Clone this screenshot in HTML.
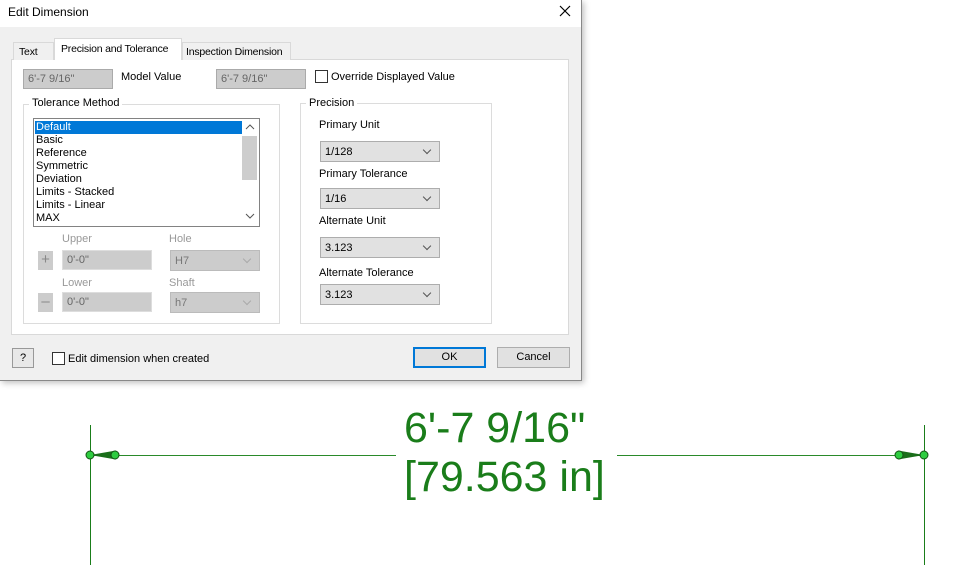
<!DOCTYPE html>
<html><head><style>
*{box-sizing:border-box;margin:0;padding:0}
body{width:961px;height:565px;background:#fff;position:relative;overflow:hidden;font-family:"Liberation Sans",sans-serif;font-size:11px;color:#000}
.a{position:absolute;white-space:nowrap}
.dlg{left:0;top:0;width:582px;height:381px;background:#f0f0f0;border-right:1px solid #888;border-bottom:1px solid #888;box-shadow:2px 2px 6px rgba(0,0,0,.25)}
.tb{left:0;top:0;width:581px;height:27px;background:#fff}
.inp{background:#ccc;border:1px solid #aaa;color:#666;padding:3px 4px;height:19px}
.combo{background:#e1e1e1;border:1px solid #adadad;height:21px;padding:4px 4px;width:120px}
.combo:after{content:"";position:absolute;right:9px;top:5px;width:5px;height:5px;border-right:1px solid #555;border-bottom:1px solid #555;transform:rotate(45deg)}
.dis{background:#ccc;border:1px solid #bbb;color:#777}
.dis:after{border-color:#aaa}
.grp{border:1px solid #dcdcdc}
.lg{background:#fff;padding:0 3px}
.cb{width:13px;height:13px;border:1px solid #333;background:#fff}
.btn{background:#e1e1e1;border:1px solid #adadad;height:21px;text-align:center;line-height:19px}
.g{color:#1a7d1a}
.tab{font-size:10.5px;letter-spacing:-0.2px}
</style></head><body>
<div class="a dlg"></div>
<div class="a tb"></div>
<div class="a" style="left:8px;top:5px;font-size:12px">Edit Dimension</div>
<svg class="a" style="left:559px;top:5px" width="12" height="12"><path d="M1 1L11 11M11 1L1 11" stroke="#000" stroke-width="1.2"/></svg>
<!-- panel -->
<div class="a" style="left:11px;top:59px;width:558px;height:276px;background:#fff;border:1px solid #d9d9d9"></div>
<div class="a tab" style="left:13px;top:42px;width:41px;height:18px;border:1px solid #d9d9d9;border-bottom:none;background:#f0f0f0;padding:3px 5px">Text</div>
<div class="a tab" style="left:54px;top:38px;width:128px;height:22px;border:1px solid #d9d9d9;border-bottom:none;background:#fff;padding:4px 6px">Precision and Tolerance</div>
<div class="a tab" style="left:182px;top:42px;width:109px;height:18px;border:1px solid #d9d9d9;border-bottom:none;background:#f0f0f0;padding:3px 3px">Inspection Dimension</div>
<div class="a inp" style="left:23px;top:69px;width:90px;height:20px">6'-7 9/16"</div>
<div class="a" style="left:121px;top:71px">Model Value</div>
<div class="a inp" style="left:216px;top:69px;width:90px;height:20px">6'-7 9/16"</div>
<div class="a cb" style="left:315px;top:70px"></div>
<div class="a" style="left:331px;top:71px">Override Displayed Value</div>
<!-- tolerance group -->
<div class="a grp" style="left:23px;top:104px;width:257px;height:220px"></div>
<div class="a lg" style="left:29px;top:97px">Tolerance Method</div>
<div class="a" style="left:33px;top:118px;width:227px;height:109px;border:1px solid #828282;background:#fff;line-height:13px;padding-left:1px">
<div style="background:#0078d7;color:#fff;width:207px;margin-top:2px;padding-left:1px">Default</div>
<div style="padding-left:1px">Basic</div><div style="padding-left:1px">Reference</div><div style="padding-left:1px">Symmetric</div><div style="padding-left:1px">Deviation</div><div style="padding-left:1px">Limits - Stacked</div><div style="padding-left:1px">Limits - Linear</div><div style="padding-left:1px">MAX</div>
</div>
<div class="a" style="left:242px;top:136px;width:15px;height:44px;background:#cdcdcd"></div>
<svg class="a" style="left:245px;top:124px" width="10" height="6"><path d="M1 5L5 1L9 5" stroke="#555" fill="none"/></svg>
<svg class="a" style="left:245px;top:213px" width="10" height="6"><path d="M1 1L5 5L9 1" stroke="#555" fill="none"/></svg>
<div class="a" style="left:62px;top:233px;color:#999">Upper</div>
<div class="a" style="left:169px;top:233px;color:#999">Hole</div>
<div class="a" style="left:38px;top:251px;width:15px;height:19px;background:#ccc;color:#888;text-align:center;font-size:15px;line-height:18px">+</div>
<div class="a inp" style="left:62px;top:250px;width:90px;height:20px;border-color:#ddd">0'-0"</div>
<div class="a combo dis" style="left:170px;top:250px;width:90px">H7</div>
<div class="a" style="left:62px;top:277px;color:#999">Lower</div>
<div class="a" style="left:169px;top:277px;color:#999">Shaft</div>
<div class="a" style="left:38px;top:293px;width:15px;height:19px;background:#ccc;color:#888;text-align:center;font-size:15px;line-height:18px">–</div>
<div class="a inp" style="left:62px;top:292px;width:90px;height:20px;border-color:#ddd">0'-0"</div>
<div class="a combo dis" style="left:170px;top:292px;width:90px">h7</div>
<!-- precision -->
<div class="a grp" style="left:300px;top:103px;width:192px;height:221px"></div>
<div class="a lg" style="left:306px;top:97px">Precision</div>
<div class="a" style="left:319px;top:119px">Primary Unit</div>
<div class="a combo" style="left:320px;top:141px">1/128</div>
<div class="a" style="left:319px;top:168px">Primary Tolerance</div>
<div class="a combo" style="left:320px;top:188px">1/16</div>
<div class="a" style="left:319px;top:215px">Alternate Unit</div>
<div class="a combo" style="left:320px;top:237px">3.123</div>
<div class="a" style="left:319px;top:267px">Alternate Tolerance</div>
<div class="a combo" style="left:320px;top:284px">3.123</div>
<!-- bottom -->
<div class="a" style="left:12px;top:348px;width:22px;height:20px;border:1px solid #999;background:#e8e8e8;text-align:center;line-height:18px;font-size:11px">?</div>
<div class="a cb" style="left:52px;top:352px"></div>
<div class="a" style="left:68px;top:353px">Edit dimension when created</div>
<div class="a btn" style="left:413px;top:347px;width:73px;border:2px solid #0078d7;line-height:17px">OK</div>
<div class="a btn" style="left:497px;top:347px;width:73px">Cancel</div>
<!-- drawing -->
<div class="a" style="left:90px;top:425px;width:1px;height:140px;background:#1a7d1a"></div>
<div class="a" style="left:924px;top:425px;width:1px;height:140px;background:#1a7d1a"></div>
<div class="a" style="left:90px;top:455px;width:306px;height:1px;background:#2a8a2a"></div>
<div class="a" style="left:617px;top:455px;width:308px;height:1px;background:#2a8a2a"></div>
<svg class="a" style="left:80px;top:445px" width="50" height="20"><polygon points="10,10 36,5.5 36,14.5" fill="#1a6e1a"/><circle cx="10" cy="10" r="4" fill="#2ecc40" stroke="#145214"/><circle cx="35" cy="10" r="4" fill="#2ecc40" stroke="#145214"/></svg>
<svg class="a" style="left:885px;top:445px" width="50" height="20"><polygon points="39,10 13,5.5 13,14.5" fill="#1a6e1a"/><circle cx="39" cy="10" r="4" fill="#2ecc40" stroke="#145214"/><circle cx="14" cy="10" r="4" fill="#2ecc40" stroke="#145214"/></svg>
<div class="a g" style="left:404px;top:404px;font-size:43px;line-height:49px">6'-7 9/16"<br>[79.563 in]</div>
</body></html>
